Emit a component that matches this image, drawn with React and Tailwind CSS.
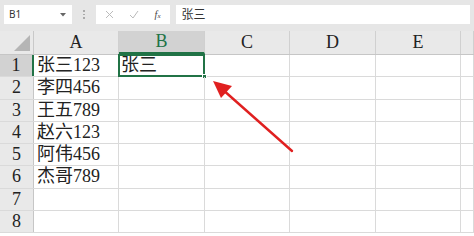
import React from 'react';

const cols = ['A', 'B', 'C', 'D', 'E', ''];
const widths = ['w-[85px]', 'w-[86px]', 'w-[85px]', 'w-[86px]', 'w-[85px]', 'flex-1'];
const data = ['张三123', '李四456', '王五789', '赵六123', '阿伟456', '杰哥789', '', ''];

const serif = { fontFamily: '"Liberation Serif", "Noto Sans CJK SC", serif' };

export default function App() {
  return (
    <div className="relative w-[474px] h-[236px] overflow-hidden bg-white select-none">
      {/* formula bar */}
      <div className="flex items-center h-[31px] bg-[#e6e6e6] px-[4px] pb-[2px] gap-[6px]" style={{ fontFamily: '"Noto Sans", "Noto Sans CJK SC", sans-serif' }}>
        <div className="flex items-center justify-between w-[68px] h-[19px] bg-white pl-[5px] pr-[6px] text-[10px] text-[#333]">
          <span>B1</span>
          <svg width="6" height="4" viewBox="0 0 6 4"><path d="M0 0h6L3 3.5z" fill="#666" /></svg>
        </div>
        <div className="flex flex-col gap-[2px] mx-[5px]">
          <span className="w-[1.5px] h-[1.5px] bg-[#aaa]" />
          <span className="w-[1.5px] h-[1.5px] bg-[#aaa]" />
          <span className="w-[1.5px] h-[1.5px] bg-[#aaa]" />
        </div>
        <div className="flex items-center justify-between w-[74px] h-[19px] bg-white px-[9px]">
          <svg width="9" height="9" viewBox="0 0 9 9"><path d="M1 1l7 7M8 1L1 8" stroke="#bbb" strokeWidth="1" /></svg>
          <svg width="10" height="9" viewBox="0 0 10 9"><path d="M1 5l3 3 5-7" stroke="#bbb" strokeWidth="1" fill="none" /></svg>
          <span className="text-[10px] italic text-[#444]" style={{ fontFamily: '"Liberation Serif", serif' }}>f<span className="text-[7px]">x</span></span>
        </div>
        <div className="flex-1 flex items-center h-[19px] bg-white pl-[6px] text-[12px] text-[#333]">张三</div>
      </div>

      {/* column headers */}
      <div className="flex h-[24px] bg-[#e9e9e9] border-b border-[#c6c6c6]" style={serif}>
        <div className="relative w-[34px] border-r border-[#c9c9c9]">
          <svg className="absolute right-[3px] bottom-[3px]" width="16" height="16" viewBox="0 0 16 16"><path d="M16 0V16H0z" fill="#b5b5b5" /></svg>
        </div>
        {cols.map((c, i) => (
          <div
            key={i}
            className={`${widths[i]} flex items-center justify-center text-[18px] border-r border-[#d0d0d0] ${c === 'B' ? 'bg-[#d2d2d2] text-[#217346] border-b-2 border-b-[#217346]' : 'text-[#222]'}`}
          >
            {c}
          </div>
        ))}
      </div>

      {/* rows */}
      {data.map((v, r) => (
        <div key={r} className="flex h-[22.25px] border-b border-[#dadada]" style={serif}>
          <div className={`w-[34px] flex items-center justify-center text-[18px] text-[#222] border-r ${r === 0 ? 'bg-[#d2d2d2] border-r-2 border-r-[#217346]' : 'bg-[#e9e9e9] border-[#c6c6c6]'}`}>
            {r + 1}
          </div>
          {cols.map((c, i) => (
            <div key={i} className={`${widths[i]} relative flex items-center text-[18px] text-[#222] border-r border-[#dadada] ${i === 0 ? 'pl-[3px]' : 'pl-[2px]'}`}>
              {i === 0 && v}
              {i === 1 && r === 0 && (
                <>
                  <div className="absolute -left-[1px] -top-[1px] -right-[1px] -bottom-[1px] border-2 border-[#217346]" />
                  <div className="absolute -right-[3px] -bottom-[3px] w-[5px] h-[5px] bg-[#217346] border border-white" />
                  <span className="relative">张三</span>
                </>
              )}
            </div>
          ))}
        </div>
      ))}

      {/* red arrow */}
      <svg className="absolute left-0 top-0 pointer-events-none" width="474" height="236">
        <line x1="292" y1="151" x2="222" y2="89" stroke="#e02020" strokeWidth="2.4" strokeLinecap="round" />
        <path d="M213 81 L232 86 L221 98 z" fill="#e02020" />
      </svg>
    </div>
  );
}
